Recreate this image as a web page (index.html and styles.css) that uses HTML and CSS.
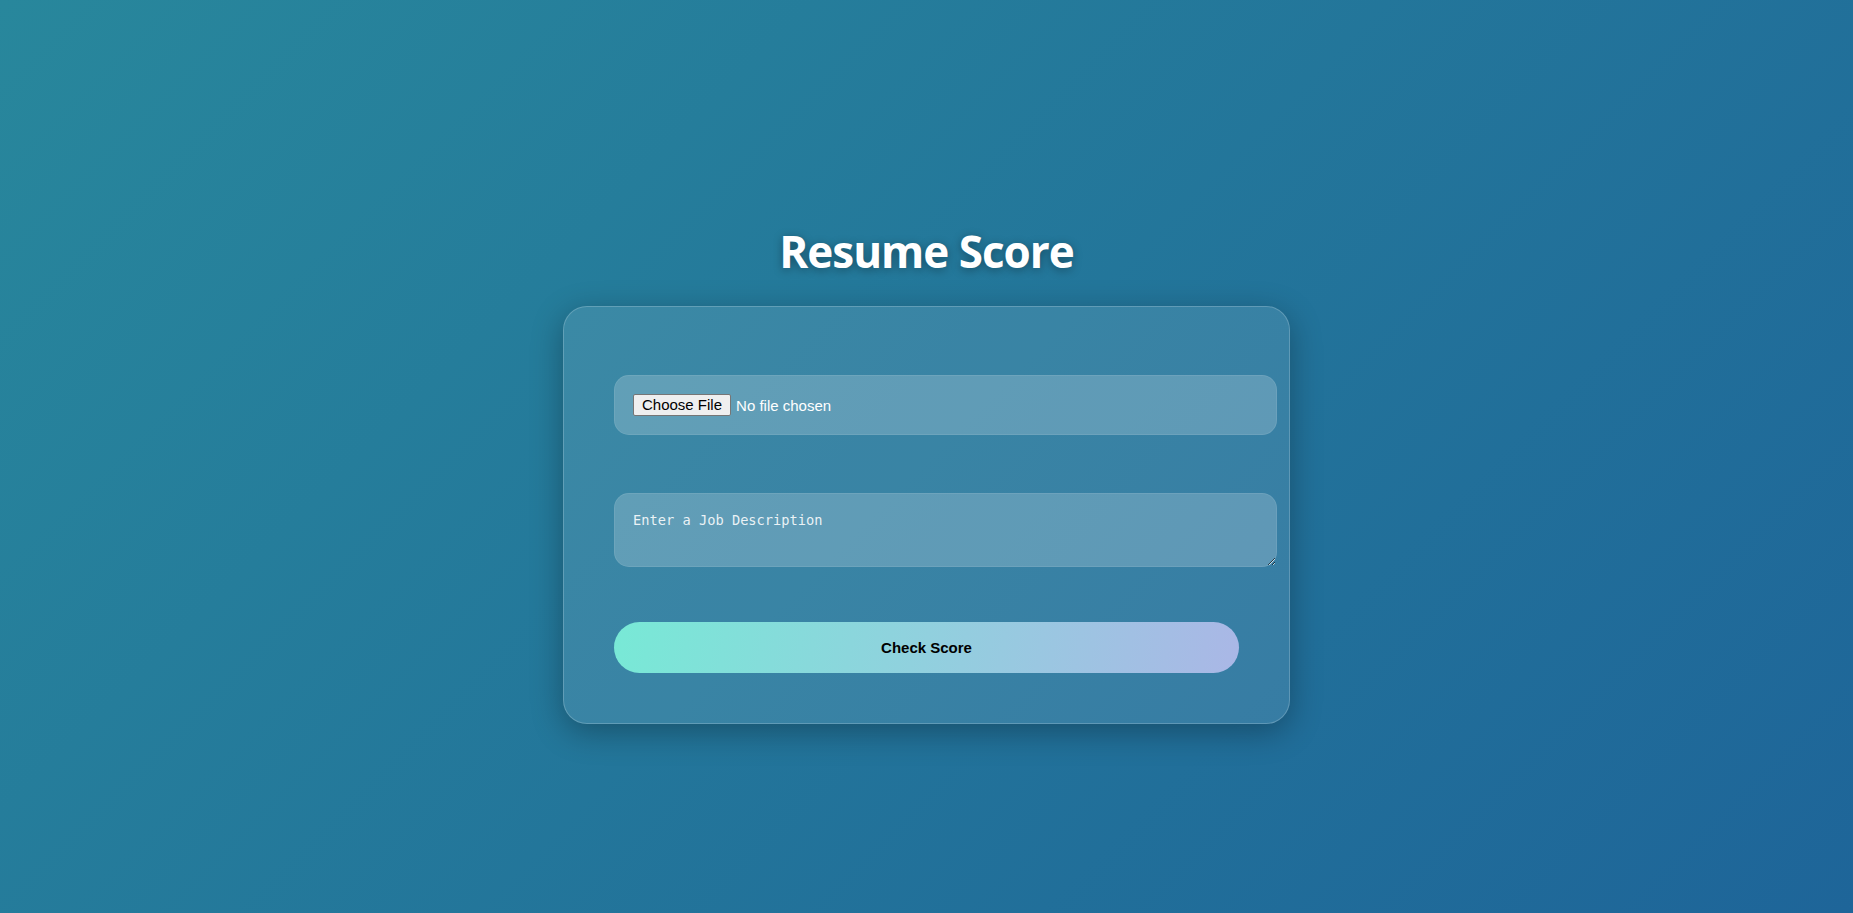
FILE: index.html
```html
<!DOCTYPE html>
<html lang="en">
<head>
    <meta charset="UTF-8">
    <meta name="viewport" content="width=device-width, initial-scale=1.0">
    <title>Resume Score</title>
    <link rel="stylesheet" href="styles.css">
</head>
<body>
    <h1>Resume Score</h1>

    <div class="container">
        <form id="scoreForm">
            <input type="file" id="resume" class="file-input" accept=".pdf,.doc,.docx">
            <textarea id="jobDescription" class="job-input" placeholder="Enter a Job Description"></textarea>
            <button type="submit" class="check-btn">Check Score</button>
        </form>
    </div>
</body>
</html>
```

FILE: styles.css
```css
body {
    margin: 0;
    min-height: 100vh;
    display: flex;
    flex-direction: column;
    align-items: center;
    justify-content: center;
    font-family: "Liberation Sans", Arial, sans-serif;
    background: linear-gradient(135deg, #28879c 0%, #1e6599 100%);
}
h1 {
    font-family: "Open Sans", "Noto Sans", sans-serif;
    font-size: 44px;
    font-weight: 700;
    line-height: 58px;
    letter-spacing: -1px;
    margin: 32px 0 26px;
    color: #ffffff;
    text-shadow: 0 2px 10px rgba(0, 0, 0, 0.35);
}
.container {
    width: 625px;
    padding: 50px;
    background-color: rgba(255, 255, 255, 0.1);
    border: 1px solid rgba(255, 255, 255, 0.2);
    border-radius: 24px;
    box-shadow: 0 8px 32px rgba(0, 0, 0, 0.3);
}
.file-input,
.job-input {
    display: block;
    width: 100%;
    padding: 18px;
    border: 1px solid rgba(255, 255, 255, 0.08);
    border-radius: 15px;
    background-color: rgba(255, 255, 255, 0.2);
    color: #ffffff;
}
.file-input {
    margin: 18px 0 58px;
    height: 22px;
    font-family: "Liberation Sans", Arial, sans-serif;
    font-size: 15px;
    line-height: 22px;
}
.file-input::file-selector-button {
    font-family: "Liberation Sans", Arial, sans-serif;
    font-size: 15px;
    height: 22px;
    padding: 0 8px;
    margin-right: 5px;
    color: #000000;
    background-color: #efefef;
    border: 1px solid #767676;
    border-radius: 2px;
}
.job-input {
    height: 36px;
    margin-bottom: 55px;
    font-family: "DejaVu Sans Mono", monospace;
    font-size: 13.7px;
    resize: vertical;
}
.job-input::placeholder {
    color: rgba(255, 255, 255, 0.88);
}
.check-btn {
    display: block;
    width: 100%;
    height: 51px;
    border: none;
    border-radius: 30px;
    background: linear-gradient(100deg, #78e9d6 0%, #aab7e6 100%);
    color: #000000;
    font-family: "Liberation Sans", Arial, sans-serif;
    font-size: 15px;
    font-weight: 700;
    cursor: pointer;
}
.check-btn:hover {
    opacity: 0.9;
}
```
